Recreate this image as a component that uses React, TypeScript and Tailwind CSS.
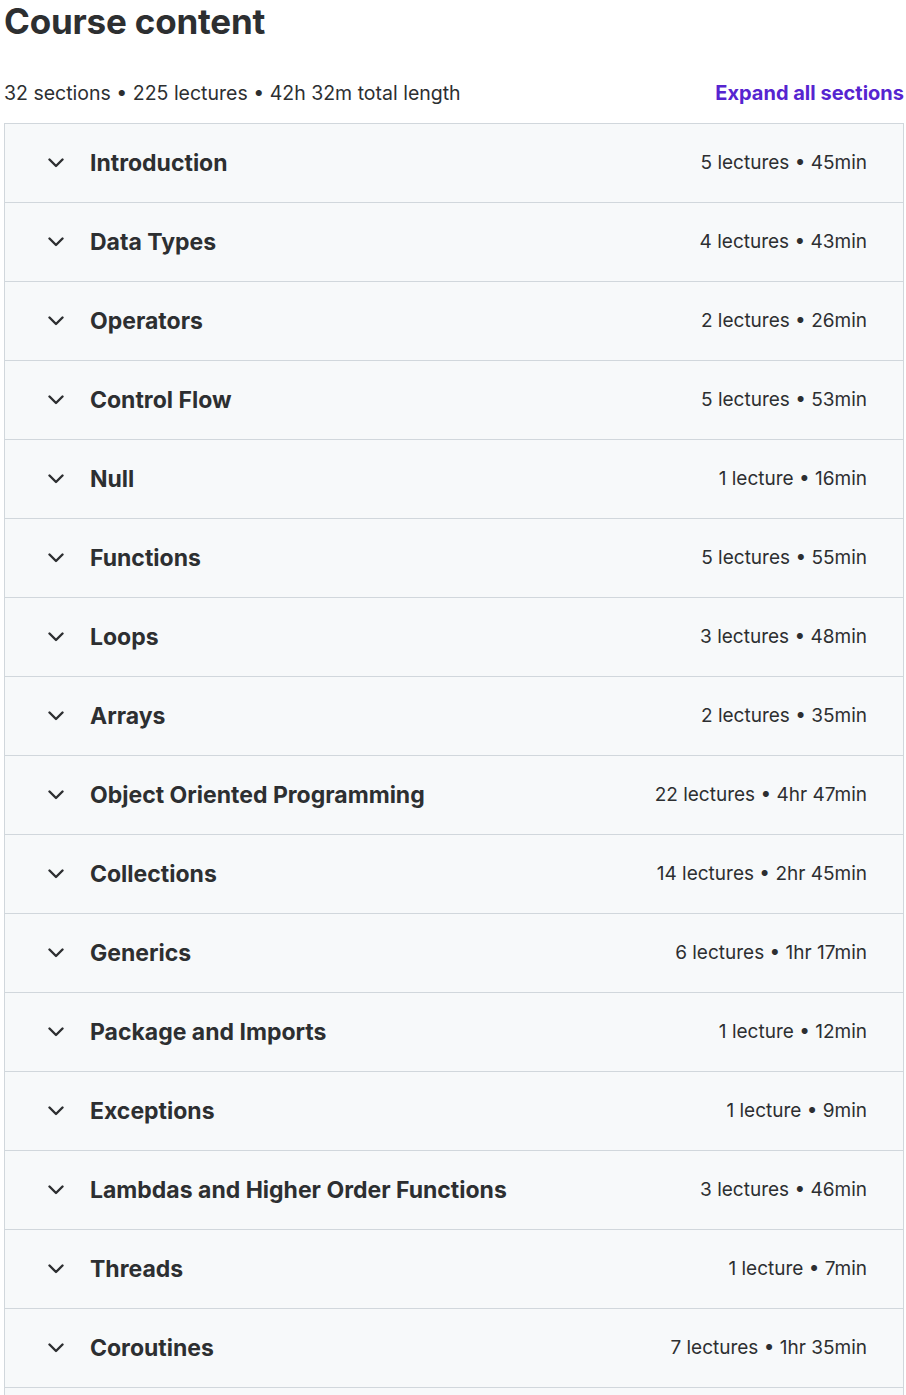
const sections: [string, string][] = [
  ["Introduction", "5 lectures • 45min"],
  ["Data Types", "4 lectures • 43min"],
  ["Operators", "2 lectures • 26min"],
  ["Control Flow", "5 lectures • 53min"],
  ["Null", "1 lecture • 16min"],
  ["Functions", "5 lectures • 55min"],
  ["Loops", "3 lectures • 48min"],
  ["Arrays", "2 lectures • 35min"],
  ["Object Oriented Programming", "22 lectures • 4hr 47min"],
  ["Collections", "14 lectures • 2hr 45min"],
  ["Generics", "6 lectures • 1hr 17min"],
  ["Package and Imports", "1 lecture • 12min"],
  ["Exceptions", "1 lecture • 9min"],
  ["Lambdas and Higher Order Functions", "3 lectures • 46min"],
  ["Threads", "1 lecture • 7min"],
  ["Coroutines", "7 lectures • 1hr 35min"],
  ["", ""],
];

function Chevron() {
  return (
    <svg width="16" height="10" viewBox="0 0 16 10" fill="none" className="shrink-0">
      <path d="M1.5 1.5 L8 8 L14.5 1.5" stroke="#2d2f31" strokeWidth="2.4" strokeLinecap="round" strokeLinejoin="round" />
    </svg>
  );
}

export default function App() {
  return (
    <div className="w-[906px] bg-white text-[#2d2f31] font-['Inter',sans-serif] pl-[4px] pr-[2px]">
      {/* Heading */}
      <h2 className="text-[35px] font-bold leading-[43px] tracking-[-0.2px]">Course content</h2>

      {/* Summary line */}
      <div className="flex items-center justify-between mt-[32px] h-[36px]">
        <span className="text-[19.5px] leading-[24px]">32 sections • 225 lectures • 42h 32m total length</span>
        <button className="text-[20px] leading-[24px] font-bold text-[#5624d0]">Expand all sections</button>
      </div>

      {/* Sections */}
      <div className="mt-[12px] border-t border-x border-[#d1d7dc]">
        {sections.map(([title, meta], i) => (
          <div
            key={i}
            className="flex items-center h-[79px] bg-[#f7f9fa] border-b border-[#d1d7dc] pl-[43px] pr-[36px]"
          >
            <Chevron />
            <span className="ml-[26px] text-[23px] font-bold leading-[28px] -mt-[1px]">{title}</span>
            <span className="ml-auto text-[19px] leading-[24px]">{meta}</span>
          </div>
        ))}
      </div>
    </div>
  );
}
